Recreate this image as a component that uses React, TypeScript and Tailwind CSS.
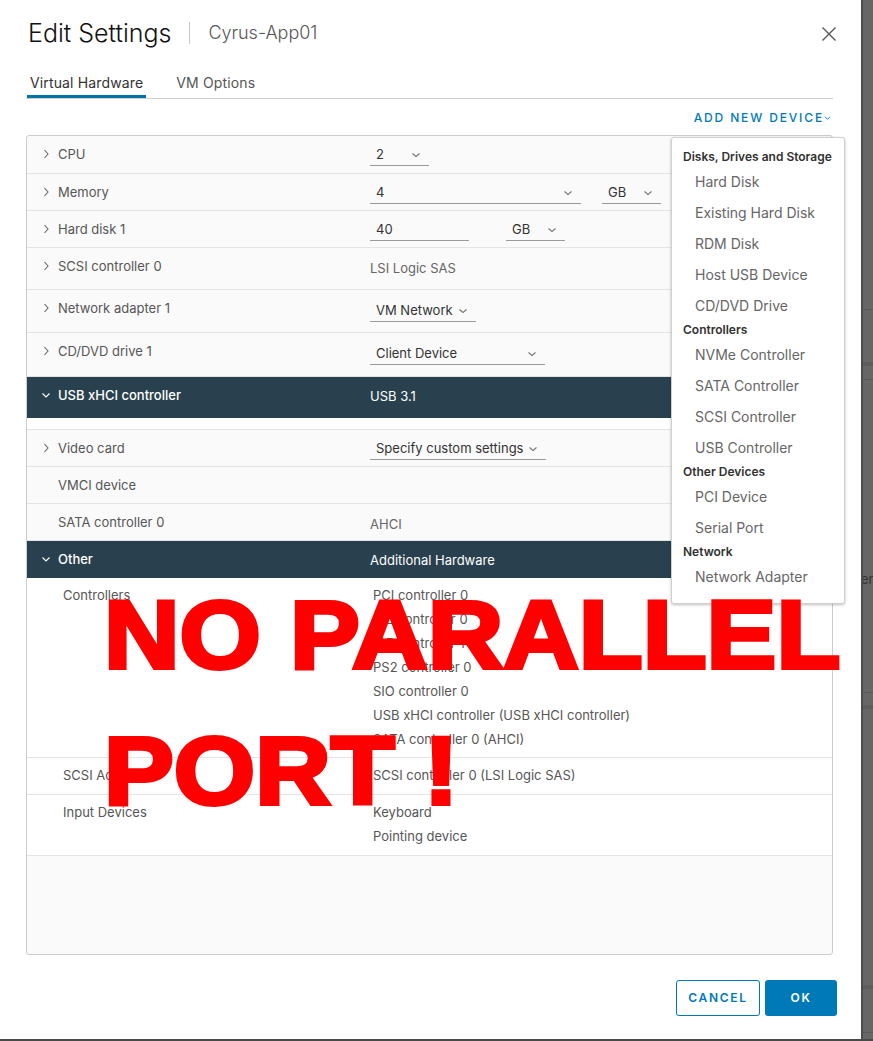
import React from 'react';

type Row = {
  label: string;
  h: string;
  expandable?: boolean;
  dark?: boolean;
  value?: React.ReactNode;
};

const Chevron = ({ down = false, className = '' }: { down?: boolean; className?: string }) => (
  <svg viewBox="0 0 12 12" className={`w-[12px] h-[12px] ${className}`} fill="none" stroke="currentColor" strokeWidth="1.1">
    {down ? <path d="M2.5 4.5 L6 8 L9.5 4.5" /> : <path d="M4.5 2 L8 6 L4.5 10" />}
  </svg>
);

const SelectArrow = () => (
  <svg viewBox="0 0 10 10" className="w-[10px] h-[10px] text-[#777]" fill="none" stroke="currentColor" strokeWidth="1.1">
    <path d="M1.5 3.5 L5 6.5 L8.5 3.5" />
  </svg>
);

const Select = ({ text, w }: { text: string; w: string }) => (
  <div className={`${w} h-[22px] flex items-center justify-between border-b border-[#9a9a9a] pl-[6px] pr-[8px] text-[#333]`}>
    <span>{text}</span>
    <SelectArrow />
  </div>
);

const Input = ({ text, w }: { text: string; w: string }) => (
  <div className={`${w} h-[22px] flex items-center border-b border-[#9a9a9a] pl-[6px] text-[#333]`}>{text}</div>
);

const rows: Row[] = [
  { label: 'CPU', h: 'h-[38px]', expandable: true, value: <Select text="2" w="w-[59px]" /> },
  {
    label: 'Memory',
    h: 'h-[37px]',
    expandable: true,
    value: (
      <div className="flex gap-[21px]">
        <Select text="4" w="w-[211px]" />
        <Select text="GB" w="w-[59px]" />
      </div>
    ),
  },
  {
    label: 'Hard disk 1',
    h: 'h-[37px]',
    expandable: true,
    value: (
      <div className="flex gap-[37px]">
        <Input text="40" w="w-[99px]" />
        <Select text="GB" w="w-[59px]" />
      </div>
    ),
  },
  { label: 'SCSI controller 0', h: 'h-[42px]', expandable: true, value: <div className="pt-[3px] text-[#666]">LSI Logic SAS</div> },
  { label: 'Network adapter 1', h: 'h-[43px]', expandable: true, value: <div className="pt-[2px]"><Select text="VM Network" w="w-[106px]" /></div> },
  { label: 'CD/DVD drive 1', h: 'h-[44px]', expandable: true, value: <div className="pt-[2px]"><Select text="Client Device" w="w-[175px]" /></div> },
];

const rows2: Row[] = [
  { label: 'Video card', h: 'h-[37px]', expandable: true, value: <Select text="Specify custom settings" w="w-[176px]" /> },
  { label: 'VMCI device', h: 'h-[37px]' },
  { label: 'SATA controller 0', h: 'h-[37px]', value: <div className="pt-[3px] text-[#666]">AHCI</div> },
];

const controllers = [
  'PCI controller 0',
  'IDE controller 0',
  'IDE controller 1',
  'PS2 controller 0',
  'SIO controller 0',
  'USB xHCI controller (USB xHCI controller)',
  'SATA controller 0 (AHCI)',
];

const menu: { title: string; items: string[] }[] = [
  { title: 'Disks, Drives and Storage', items: ['Hard Disk', 'Existing Hard Disk', 'RDM Disk', 'Host USB Device', 'CD/DVD Drive'] },
  { title: 'Controllers', items: ['NVMe Controller', 'SATA Controller', 'SCSI Controller', 'USB Controller'] },
  { title: 'Other Devices', items: ['PCI Device', 'Serial Port'] },
  { title: 'Network', items: ['Network Adapter'] },
];

function HwRow({ row }: { row: Row }) {
  return (
    <div
      className={`${row.h} flex items-start pt-[9px] shrink-0 ${
        row.dark ? 'bg-[#29414e] text-white' : 'border-b border-[#e4e4e4] text-[#565656]'
      }`}
    >
      <div className={`w-[343px] pl-[13px] flex items-center gap-[6px] pt-[1px] leading-[16px] ${row.dark ? 'font-medium' : ''}`}>
        <div className={`w-[12px] ${row.dark ? 'text-white' : 'text-[#666]'}`}>{row.expandable && <Chevron down={row.dark} />}</div>
        <span>{row.label}</span>
      </div>
      <div className="-mt-[1px]">{row.value}</div>
    </div>
  );
}

function DetailRow({ label, items, h }: { label: string; items: string[]; h: string }) {
  return (
    <div className={`${h} flex pt-[5px] border-b border-[#e4e4e4] bg-white text-[#565656] leading-[24px] shrink-0`}>
      <div className="w-[346px] pl-[36px]">{label}</div>
      <div className="flex flex-col">
        {items.map((it) => (
          <span key={it}>{it}</span>
        ))}
      </div>
    </div>
  );
}

export default function App() {
  return (
    <div className="relative w-[873px] h-[1041px] bg-[#4a4a4a] flex items-start overflow-hidden font-['Inter',sans-serif] text-[13px]">
      {/* dialog */}
      <div className="w-[861px] shrink-0 h-[1039px] bg-white flex flex-col pl-[26px] pr-[28px]">
        <div className="flex items-center justify-between pt-[17px]">
          <div className="flex items-center">
            <h1 className="text-[25px] leading-[32px] font-light text-[#111] pl-[2px]">Edit Settings</h1>
            <div className="w-px h-[22px] bg-[#c8c8c8] mx-[18px]" />
            <span className="text-[18px] leading-[24px] font-light text-[#565656]">Cyrus-App01</span>
          </div>
          <svg viewBox="0 0 16 16" className="w-[16px] h-[16px] -mr-[4px] mt-[2px]" fill="none" stroke="#565656" strokeWidth="1.4">
            <path d="M1.5 1.5 L14.5 14.5 M14.5 1.5 L1.5 14.5" />
          </svg>
        </div>

        <div className="flex mt-[18px] border-b border-[#ccc] pl-[1px]">
          <div className="h-[31px] pt-[6px] px-[3px] border-b-[3px] border-[#0072a3] text-[14px] leading-[20px] text-[#333] tracking-[0.01em]">Virtual Hardware</div>
          <div className="h-[31px] pt-[6px] px-[3px] ml-[27px] text-[14px] leading-[20px] text-[#565656] tracking-[0.01em]">VM Options</div>
        </div>

        <div className="flex justify-end items-center mt-[12px] pr-[2px] text-[#0079b8] text-[12px] leading-[14px] font-medium tracking-[0.155em]">
          ADD NEW DEVICE
          <svg viewBox="0 0 8 6" className="w-[7px] h-[5px]" fill="none" stroke="currentColor" strokeWidth="1.1">
            <path d="M1 1 L4 4 L7 1" />
          </svg>
        </div>

        <div className="mt-[10px] h-[820px] border border-[#ccc] rounded-[3px] bg-[#fafafa] flex flex-col overflow-hidden">
          {rows.map((r) => (
            <HwRow key={r.label} row={r} />
          ))}
          <HwRow row={{ label: 'USB xHCI controller', h: 'h-[41px]', expandable: true, dark: true, value: <div className="pt-[2px]">USB 3.1</div> }} />
          <div className="h-[12px] bg-white border-b border-[#e4e4e4] shrink-0" />
          {rows2.map((r) => (
            <HwRow key={r.label} row={r} />
          ))}
          <HwRow row={{ label: 'Other', h: 'h-[37px]', expandable: true, dark: true, value: <div className="pt-[2px]">Additional Hardware</div> }} />
          <DetailRow label="Controllers" items={controllers} h="h-[180px]" />
          <DetailRow label="SCSI Adapters" items={['SCSI controller 0 (LSI Logic SAS)']} h="h-[37px]" />
          <DetailRow label="Input Devices" items={['Keyboard', 'Pointing device']} h="h-[61px]" />
        </div>

        <div className="flex justify-end gap-[5px] mt-[25px] -mr-[4px] text-[12px] font-semibold tracking-[0.14em]">
          <button className="w-[84px] h-[36px] border border-[#0079b8] rounded-[3px] text-[#0079b8] bg-white">CANCEL</button>
          <button className="w-[72px] h-[36px] rounded-[3px] bg-[#0079b8] text-white">OK</button>
        </div>
      </div>

      {/* page behind the dialog */}
      <div className="flex-1 h-[1039px] bg-[#666] border-l-2 border-[#4d4d4d] flex flex-col overflow-hidden">
        <div className="h-[310px] border-b border-[#5a5a5a] shrink-0" />
        <div className="h-[52px] shrink-0" />
        <div className="h-[4px] bg-[#5c5c5c] shrink-0" />
        <div className="h-[14px] border-b border-[#5a5a5a] shrink-0" />
        <div className="h-[191px] shrink-0" />
        <div className="h-[16px] text-[13px] text-[#333] leading-[16px] -ml-[2px] shrink-0">en</div>
        <div className="h-[106px] border-b border-[#5a5a5a] shrink-0" />
        <div className="h-[12px] shrink-0" />
        <div className="h-[4px] bg-[#5c5c5c] shrink-0" />
        <div className="h-[276px] shrink-0" />
        <div className="h-[4px] bg-[#5c5c5c] shrink-0" />
        <div className="h-[44px] border-b border-[#5a5a5a] shrink-0" />
      </div>

      {/* add device menu */}
      <div className="absolute left-[671px] top-[137px] w-[174px] h-[467px] bg-white border border-[#d0d0d0] rounded-[3px] shadow-[0_1px_3px_rgba(0,0,0,0.25)] pt-[10px] pl-[11px]">
        {menu.map((g) => (
          <div key={g.title}>
            <div className="h-[18px] leading-[18px] text-[12px] font-semibold text-[#313131]">{g.title}</div>
            {g.items.map((it) => (
              <div key={it} className="h-[31px] leading-[31px] pl-[12px] text-[14px] text-[#666]">
                {it}
              </div>
            ))}
          </div>
        ))}
      </div>

      {/* stamp over the list */}
      <div className="absolute left-[104px] top-[567px] origin-left scale-x-[1.09] font-['Liberation_Sans',Arial,sans-serif] font-bold text-[96px] leading-[136px] text-[#ff0000] [-webkit-text-stroke:4px_#ff0000] whitespace-nowrap">
        <div>NO PARALLEL</div>
        <div>PORT !</div>
      </div>
    </div>
  );
}
